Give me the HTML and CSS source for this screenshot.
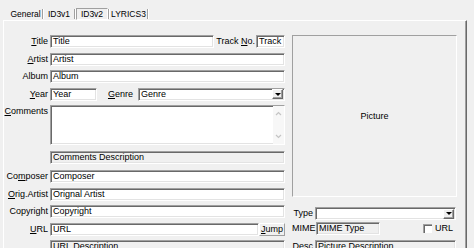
FILE: index.html
```html
<!DOCTYPE html>
<html>
<head>
<meta charset="utf-8">
<link rel="stylesheet" href="styles.css">
</head>
<body>
<div class="tabs">
  <span class="tab tab-general">General</span><span class="sep"></span>
  <span class="tab tab-v1">ID3v1</span><span class="sep"></span>
  <span class="tab tab-v2 active">ID3v2</span><span class="sep"></span>
  <span class="tab tab-ly">LYRICS3</span><span class="sep"></span>
</div>
<div class="panel">
  <div class="left">
    <div class="row">
      <span class="lbl"><u>T</u>itle</span>
      <div class="field w-title">Title</div>
      <span class="lbl-mid">Track <u>N</u>o.</span>
      <div class="field w-track">Track</div>
    </div>
    <div class="row">
      <span class="lbl"><u>A</u>rtist</span>
      <div class="field grow">Artist</div>
    </div>
    <div class="row">
      <span class="lbl">Album</span>
      <div class="field grow">Album</div>
    </div>
    <div class="row">
      <span class="lbl"><u>Y</u>ear</span>
      <div class="field w-year">Year</div>
      <span class="lbl-mid genre-lbl"><u>G</u>enre</span>
      <div class="field combo w-genre"><span class="combo-text">Genre</span><span class="drop"><span class="tri"></span></span></div>
    </div>
    <div class="row memo-row">
      <span class="lbl lbl-top"><u>C</u>omments</span>
      <div class="field memo grow">
        <span class="memo-text"></span>
        <span class="vscroll">
          <svg width="11" height="38" viewBox="0 0 11 38"><polyline points="3,9 5.5,6.5 8,9" fill="none" stroke="#c4c4c4" stroke-width="1.2"/><polyline points="3,29 5.5,31.5 8,29" fill="none" stroke="#c4c4c4" stroke-width="1.2"/></svg>
        </span>
      </div>
    </div>
    <div class="row desc-row">
      <span class="lbl"></span>
      <div class="field ro grow">Comments Description</div>
    </div>
    <div class="row composer-row">
      <span class="lbl">Co<u>m</u>poser</span>
      <div class="field grow">Composer</div>
    </div>
    <div class="row">
      <span class="lbl"><u>O</u>rig.Artist</span>
      <div class="field grow">Orignal Artist</div>
    </div>
    <div class="row">
      <span class="lbl">Copyright</span>
      <div class="field grow">Copyright</div>
    </div>
    <div class="row">
      <span class="lbl"><u>U</u>RL</span>
      <div class="field grow">URL</div>
      <span class="btn"><u>J</u>ump</span>
    </div>
    <div class="row">
      <span class="lbl"></span>
      <div class="field ro grow">URL Description</div>
    </div>
  </div>
  <div class="right">
    <div class="picture">Picture</div>
    <div class="rrow type-row">
      <span class="rlbl">Type</span>
      <div class="field combo grow"><span class="combo-text"></span><span class="drop"><span class="tri"></span></span></div>
    </div>
    <div class="rrow mime-row">
      <span class="rlbl">MIME</span>
      <div class="field ro w-mime">MIME Type</div>
      <span class="chk-group"><span class="chk"></span><span class="chk-text">URL</span></span>
    </div>
    <div class="rrow pdesc-row">
      <span class="rlbl">Desc</span>
      <div class="field ro grow">Picture Description</div>
    </div>
  </div>
</div>
</body>
</html>
```
FILE: styles.css
```css
* { box-sizing: border-box; }
html, body { margin: 0; padding: 0; }
body {
  width: 474px;
  height: 248px;
  overflow: hidden;
  background: #f0f0f0;
  color: #000;
  font-family: "Liberation Sans", Arial, sans-serif;
  font-size: 9px;
}
u { text-decoration: underline; }

/* tabs */
.tabs {
  display: flex;
  align-items: center;
  height: 20px;
  padding: 8px 0 0 9px;
  font-size: 8.5px;
}
.tab { height: 12px; line-height: 12px; text-align: center; white-space: nowrap; }
.tab-general { width: 33px; }
.tab-v1 { width: 30px; }
.tab-v2 { width: 32px; }
.tab-ly { width: 37px; }
.tab.active {
  border: 1px solid;
  border-color: #a0a0a0 #ffffff #ffffff #a0a0a0;
  line-height: 10px;
}
.sep {
  width: 2px;
  height: 10px;
  border-left: 1px solid #a0a0a0;
  border-right: 1px solid #ffffff;
}

/* panel */
.panel {
  margin-left: 3px;
  width: 464px;
  height: 240px;
  border-top: 1px solid #ffffff;
  border-left: 1px solid #ffffff;
  border-right: 1px solid #696969;
  box-shadow: inset -1px 0 0 #a0a0a0;
  display: flex;
  gap: 7px;
  padding: 14px 0 0 0;
}

.left {
  width: 281px;
  display: flex;
  flex-direction: column;
  gap: 4.5px;
}
.row { display: flex; height: 13px; flex: none; }
.memo-row { height: 40px; }
.desc-row { margin-top: 1.5px; }
.composer-row { margin-top: 1.5px; }

.lbl {
  width: 46px;
  flex: none;
  padding-right: 2px;
  text-align: right;
  line-height: 13px;
  white-space: nowrap;
}
.lbl-top { align-self: flex-start; }
.lbl-mid {
  flex: 1;
  text-align: right;
  padding-right: 1px;
  line-height: 13px;
  white-space: nowrap;
}
.genre-lbl { padding-right: 5px; }

.field {
  height: 13px;
  background: #ffffff;
  border: 1px solid;
  border-color: #a0a0a0 #ffffff #ffffff #a0a0a0;
  box-shadow: inset 1px 1px 0 #696969, inset -1px -1px 0 #e3e3e3;
  line-height: 11px;
  padding: 0 2px;
  white-space: nowrap;
  overflow: hidden;
}
.field.ro { background: #f0f0f0; }
.grow { flex: 1; min-width: 0; }
.w-title { width: 164px; flex: none; }
.w-track { width: 29px; flex: none; }
.w-year { width: 47px; flex: none; }
.w-genre { width: 147px; flex: none; }
.w-mime { width: 64px; flex: none; margin-left: 1px; }

.combo { display: flex; align-items: center; padding: 0 1px 0 2px; }
.combo-text { flex: 1; }
.drop {
  width: 11px;
  height: 10px;
  background: #f0f0f0;
  border: 1px solid;
  border-color: #ffffff #696969 #696969 #ffffff;
  box-shadow: inset -1px -1px 0 #a0a0a0;
  display: flex;
  align-items: center;
  justify-content: center;
}
.tri {
  width: 0;
  height: 0;
  border-left: 3px solid transparent;
  border-right: 3px solid transparent;
  border-top: 3px solid #000;
}

.memo { height: 40px; display: flex; padding: 0 0 0 2px; }
.memo-text { flex: 1; }
.vscroll {
  width: 11px;
  height: 38px;
  background: #f7f7f7;
  display: block;
}
.vscroll svg { display: block; }

.btn {
  width: 26px;
  flex: none;
  height: 13px;
  line-height: 11px;
  text-align: center;
  background: #f0f0f0;
  border: 1px solid;
  border-color: #ffffff #a0a0a0 #a0a0a0 #ffffff;
}

/* right column */
.right {
  width: 165px;
  display: flex;
  flex-direction: column;
}
.picture {
  height: 162px;
  flex: none;
  border: 1px solid;
  border-color: #a0a0a0 #ffffff #ffffff #a0a0a0;
  display: flex;
  align-items: center;
  justify-content: center;
}
.rrow { display: flex; height: 13px; flex: none; }
.type-row { margin-top: 10px; margin-right: 1px; }
.mime-row { margin-top: 2px; }
.pdesc-row { margin-top: 5px; margin-right: 1px; }
.rlbl {
  width: 23px;
  flex: none;
  padding-right: 2px;
  text-align: right;
  line-height: 13px;
  white-space: nowrap;
}
.chk-group {
  flex: 1;
  display: flex;
  align-items: center;
  justify-content: flex-end;
  padding-right: 4px;
}
.chk {
  width: 9px;
  height: 9px;
  background: #ffffff;
  border-top: 1px solid #a0a0a0;
  border-left: 1px solid #a0a0a0;
  box-shadow: inset 1px 1px 0 #696969;
}
.chk-text { margin-left: 3px; line-height: 13px; }
```
